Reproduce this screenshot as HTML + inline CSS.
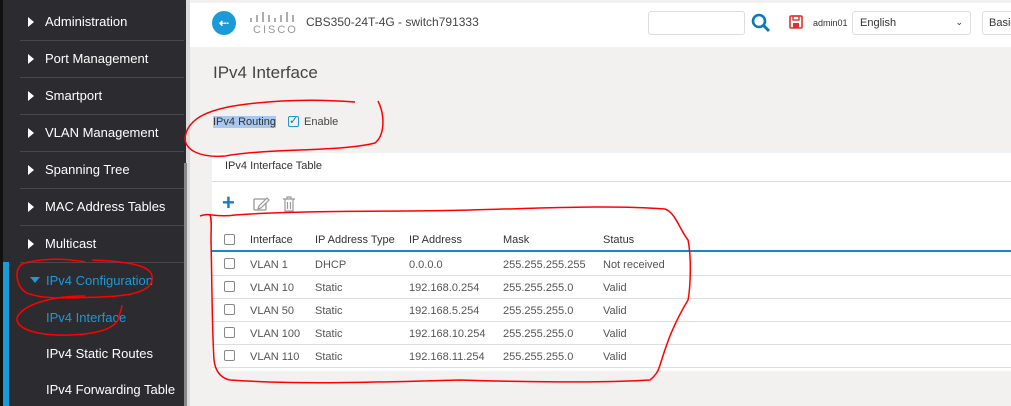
<!DOCTYPE html>
<html><head><meta charset="utf-8"><style>
*{margin:0;padding:0;box-sizing:border-box}
body{width:1011px;height:406px;overflow:hidden;background:#f2f1f0;font-family:"Liberation Sans",Arial,sans-serif;position:relative;color:#333}
.sb{position:absolute;left:0;top:0;width:186px;height:406px;background:#2c2b2f}
.sb .edge{position:absolute;left:0;top:0;width:3px;height:406px;background:#111}
.sb .blue{position:absolute;left:3px;top:262px;width:6px;height:144px;background:#1a9ad6}
.it{position:absolute;left:28px;color:#fff;font-size:13px}
.it:before{content:"";position:absolute;left:0;top:3px;border-left:6px solid #fff;border-top:5px solid transparent;border-bottom:5px solid transparent}
.it span{margin-left:17px}
.sep{position:absolute;left:20px;width:164px;height:1px;background:#48474c}
.sub{position:absolute;left:46px;color:#fff;font-size:13px}
.gap{position:absolute;left:186px;top:0;width:4px;height:406px;background:#dcdcdc}
.scroll{position:absolute;left:184px;top:163px;width:3px;height:243px;background:#888}
.hdr{position:absolute;left:190px;top:3px;width:821px;height:44px;background:#fff}
.abs{position:absolute}
.panel{position:absolute;left:212px;top:153px;width:799px;height:218px;background:#fff}
.row{position:absolute;left:212px;width:799px;height:23px;border-bottom:1px solid #ddd;font-size:11px;color:#555}
.row span,.hrow span{position:absolute;top:6px}
.cb{position:absolute;left:12px;top:5px;width:11px;height:11px;border:1px solid #888;border-radius:2px;background:#fff}
</style></head><body>
<div class="sb"><div class="edge"></div><div class="blue"></div>
<div class="it" style="top:14px"><span>Administration</span></div><div class="sep" style="top:40px"></div>
<div class="it" style="top:51px"><span>Port Management</span></div><div class="sep" style="top:77px"></div>
<div class="it" style="top:88px"><span>Smartport</span></div><div class="sep" style="top:114px"></div>
<div class="it" style="top:125px"><span>VLAN Management</span></div><div class="sep" style="top:151px"></div>
<div class="it" style="top:162px"><span>Spanning Tree</span></div><div class="sep" style="top:188px"></div>
<div class="it" style="top:199px"><span>MAC Address Tables</span></div><div class="sep" style="top:225px"></div>
<div class="it" style="top:236px"><span>Multicast</span></div><div class="sep" style="top:262px"></div>
<div class="abs" style="left:30px;top:277px;border-top:6px solid #1a9ad6;border-left:5px solid transparent;border-right:5px solid transparent"></div>
<div class="abs" style="left:46px;top:273px;color:#1a9ad6;font-size:13px">IPv4 Configuration</div>
<div class="sub" style="top:310px;color:#1a9ad6">IPv4 Interface</div>
<div class="sub" style="top:346px">IPv4 Static Routes</div>
<div class="sub" style="top:382px">IPv4 Forwarding Table</div>
</div>
<div class="gap"></div><div class="scroll"></div>
<div class="hdr"></div>
<div class="abs" style="left:212px;top:11px;width:24px;height:24px;border-radius:50%;background:#1a9ad6;color:#fff;font-size:12px;text-align:center;line-height:24px;font-weight:bold">⇠</div>
<svg class="abs" style="left:249px;top:12px" width="50" height="12"><g stroke="#999" stroke-width="1.6"><line x1="2" y1="6" x2="2" y2="10"/><line x1="8" y1="3" x2="8" y2="10"/><line x1="14" y1="0" x2="14" y2="10"/><line x1="20" y1="3" x2="20" y2="10"/><line x1="26" y1="6" x2="26" y2="10"/><line x1="32" y1="3" x2="32" y2="10"/><line x1="38" y1="0" x2="38" y2="10"/><line x1="44" y1="3" x2="44" y2="10"/></g></svg>
<div class="abs" style="left:253px;top:24px;font-size:11px;color:#999;letter-spacing:2px">CISCO</div>
<div class="abs" style="left:306px;top:15px;font-size:12px;color:#444">CBS350-24T-4G - switch791333</div>
<div class="abs" style="left:648px;top:11px;width:97px;height:24px;border:1px solid #ddd;border-radius:3px;background:#fff"></div>
<svg class="abs" style="left:751px;top:13px" width="20" height="20"><circle cx="8" cy="8" r="6" stroke="#0a7bb5" stroke-width="2.6" fill="none"/><line x1="12.5" y1="12.5" x2="18" y2="18" stroke="#0a7bb5" stroke-width="3"/></svg>
<svg class="abs" style="left:789px;top:15px" width="14" height="14"><rect x="1" y="1" width="12" height="12" rx="1" fill="none" stroke="#e03030" stroke-width="1.6"/><rect x="4" y="1" width="6" height="4" fill="none" stroke="#e03030" stroke-width="1.4"/><rect x="4" y="8" width="6" height="5" fill="#e03030"/></svg>
<div class="abs" style="left:813px;top:18px;font-size:9px;color:#333">admin01</div>
<div class="abs" style="left:852px;top:11px;width:119px;height:24px;border:1px solid #ddd;border-radius:3px;background:#fff;font-size:11px;padding:5px 7px;color:#333">English<span style="position:absolute;right:7px;top:5px;font-size:9px">⌄</span></div>
<div class="abs" style="left:982px;top:11px;width:40px;height:24px;border:1px solid #ddd;border-radius:3px;background:#fff;font-size:11px;padding:5px 6px;color:#333">Basic</div>
<div class="abs" style="left:213px;top:63px;font-size:17px;color:#444">IPv4 Interface</div>
<div class="abs" style="left:213px;top:116px;font-size:11px;color:#333;background:#a8c8f0">IPv4 Routing</div><div class="abs" style="left:272px;top:116px;font-size:11px;color:#555">:</div>
<div class="abs" style="left:288px;top:116px;width:11px;height:11px;border:1px solid #1a9ad6;border-radius:2px;color:#1a6fb0;font-size:11px;line-height:9px;text-align:center">✓</div>
<div class="abs" style="left:304px;top:116px;font-size:11px;color:#444">Enable</div>
<div class="panel"></div>
<div class="abs" style="left:212px;top:181px;width:799px;height:1px;background:#ddd"></div>
<div class="abs" style="left:225px;top:160px;font-size:11px;color:#333">IPv4 Interface Table</div>
<div class="abs" style="left:222px;top:192px;font-size:22px;color:#1a7cc0;font-weight:bold;line-height:22px">+</div>
<svg class="abs" style="left:253px;top:196px" width="18" height="16"><rect x="1" y="3" width="12" height="11" rx="1" fill="none" stroke="#999" stroke-width="1.3"/><path d="M6 10 L14 2 L16 4 L8 12 L5 13 Z" fill="#fff" stroke="#999" stroke-width="1.2"/></svg>
<svg class="abs" style="left:282px;top:196px" width="14" height="16"><path d="M1 3H13M5 3V1H9V3M3 3V15H11V3M5.5 6V13M8.5 6V13" fill="none" stroke="#999" stroke-width="1.2"/></svg>
<div class="row hrow" style="top:228px;height:24px;border-bottom:2px solid #1a86c8;color:#333"><div class="cb" style="top:6px"></div><span style="left:38px">Interface</span><span style="left:103px">IP Address Type</span><span style="left:197px">IP Address</span><span style="left:291px">Mask</span><span style="left:391px">Status</span></div>
<div class="row" style="top:253px"><div class="cb"></div><span style="left:38px">VLAN 1</span><span style="left:103px">DHCP</span><span style="left:197px">0.0.0.0</span><span style="left:291px">255.255.255.255</span><span style="left:391px">Not received</span></div>
<div class="row" style="top:276px"><div class="cb"></div><span style="left:38px">VLAN 10</span><span style="left:103px">Static</span><span style="left:197px">192.168.0.254</span><span style="left:291px">255.255.255.0</span><span style="left:391px">Valid</span></div>
<div class="row" style="top:299px"><div class="cb"></div><span style="left:38px">VLAN 50</span><span style="left:103px">Static</span><span style="left:197px">192.168.5.254</span><span style="left:291px">255.255.255.0</span><span style="left:391px">Valid</span></div>
<div class="row" style="top:322px"><div class="cb"></div><span style="left:38px">VLAN 100</span><span style="left:103px">Static</span><span style="left:197px">192.168.10.254</span><span style="left:291px">255.255.255.0</span><span style="left:391px">Valid</span></div>
<div class="row" style="top:345px"><div class="cb"></div><span style="left:38px">VLAN 110</span><span style="left:103px">Static</span><span style="left:197px">192.168.11.254</span><span style="left:291px">255.255.255.0</span><span style="left:391px">Valid</span></div>
<svg class="abs" style="left:0;top:0" width="1011" height="406" fill="none" stroke="#f00" stroke-width="1.5">
<path d="M378 101 C385 115 385 135 375 143 C340 152 270 148 225 156 C200 158 185 150 185 138 C187 120 205 110 240 105 C290 98 330 100 355 102"/>
<path d="M200 216 C210 212 215 218 235 215 C300 210 400 212 470 210 C550 208 610 205 665 209 C675 212 680 230 688 240 C692 260 690 290 688 300 C670 330 665 350 660 365 C658 372 655 376 650 380 C600 383 520 382 460 380 C380 382 300 385 230 380 C220 378 215 370 214 360 C212 330 212 280 211 240 C211 228 212 220 210 215"/>
<path d="M85 262 C65 258 40 258 22 264 C14 270 16 285 25 292 C40 300 70 298 100 297 C130 296 150 292 152 280 C154 268 140 262 92 260"/>
<path d="M85 296 C50 296 22 305 17 318 C16 330 40 336 70 335 C95 334 112 330 118 320 C120 312 122 308 122 305"/>
</svg>
</body></html>
